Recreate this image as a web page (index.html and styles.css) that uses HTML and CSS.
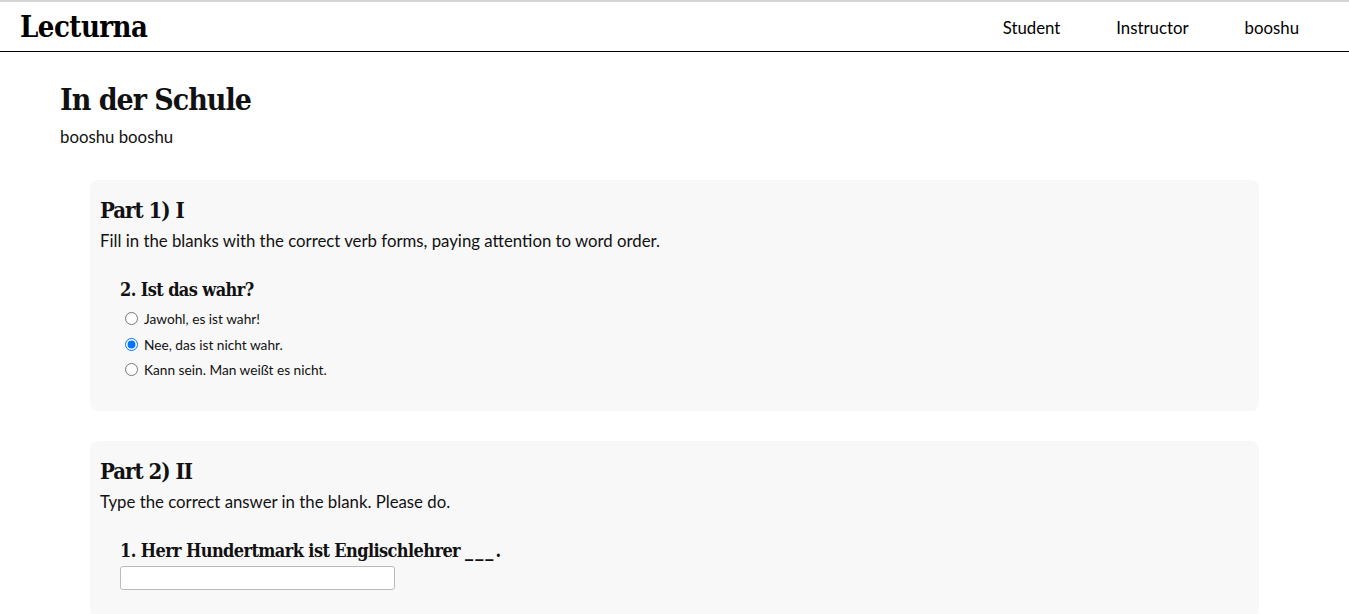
FILE: index.html
```html
<!DOCTYPE html>
<html lang="de">
<head>
<meta charset="utf-8">
<title>Lecturna</title>
<link rel="stylesheet" href="styles.css">
</head>
<body>
<header class="topbar">
  <a class="logo" href="#">Lecturna</a>
  <nav class="nav">
    <a href="#">Student</a>
    <a href="#">Instructor</a>
    <a href="#">booshu</a>
  </nav>
</header>
<main class="main">
  <h1 class="title">In der Schule</h1>
  <p class="subtitle">booshu booshu</p>

  <section class="part">
    <h2 class="part-title">Part 1) I</h2>
    <p class="part-desc">Fill in the blanks with the correct verb forms, paying attention to word order.</p>
    <div class="question">
      <h3 class="q-title">2. Ist das wahr?</h3>
      <div class="options">
        <label class="option"><input type="radio" name="q2"> Jawohl, es ist wahr!</label>
        <label class="option"><input type="radio" name="q2" checked> Nee, das ist nicht wahr.</label>
        <label class="option"><input type="radio" name="q2"> Kann sein. Man weißt es nicht.</label>
      </div>
    </div>
  </section>

  <section class="part">
    <h2 class="part-title">Part 2) II</h2>
    <p class="part-desc">Type the correct answer in the blank. Please do.</p>
    <div class="question">
      <h3 class="q-title">1. Herr Hundertmark ist Englischlehrer <span class="blank">___</span>.</h3>
      <input class="answer" type="text">
    </div>
  </section>
</main>
</body>
</html>
```

FILE: styles.css
```css
* { box-sizing: border-box; }
html, body { margin: 0; padding: 0; background: #fff; }
body {
  font-family: Lato, "Noto Sans", sans-serif;
  color: #111;
  border-top: 2px solid #d4d4d4;
}
.topbar {
  display: flex;
  align-items: center;
  justify-content: space-between;
  height: 50px;
  padding: 0 20px;
  border-bottom: 1px solid #000;
}
.logo {
  font-family: "DejaVu Serif Condensed", "DejaVu Serif", serif;
  font-weight: bold;
  font-size: 29px;
  letter-spacing: -0.5px;
  color: #000;
  text-decoration: none;
}
.nav { display: flex; padding-right: 30px; padding-top: 2px; }
.nav a {
  color: #000;
  text-decoration: none;
  font-size: 16.8px;
  margin-left: 56px;
}
.main { padding: 28px 60px 0; }
.title {
  font-family: "DejaVu Serif Condensed", "DejaVu Serif", serif;
  font-weight: bold;
  font-size: 30px;
  letter-spacing: -1px;
  margin: 0;
  line-height: 40px;
}
.subtitle { margin: 6px 0 0; font-size: 16.8px; }
.part {
  background: #f8f8f8;
  border-radius: 8px;
  margin: 33px 30px 0;
  padding: 16px 10px 28px;
}
.part + .part { margin-top: 30px; }
.part-title {
  font-family: "DejaVu Serif Condensed", "DejaVu Serif", serif;
  font-weight: bold;
  font-size: 22px;
  letter-spacing: -1px;
  margin: 0;
  line-height: 28px;
}
.part-desc { margin: 6px 0 0; font-size: 16.8px; }
.question { padding: 27px 20px 0; }
.q-title {
  font-family: "DejaVu Serif Condensed", "DejaVu Serif", serif;
  font-weight: bold;
  font-size: 18px;
  letter-spacing: -0.6px;
  margin: 0 0 3px;
  line-height: 24px;
}
.blank { letter-spacing: 2px; }
.options { padding-top: 1px; }
.option {
  display: flex;
  align-items: center;
  font-size: 13.7px;
  height: 25.5px;
  padding-left: 5px;
}
.option input { margin: 0 6px 0 0; width: 13px; height: 13px; }
.answer {
  display: block;
  width: 275px;
  height: 24px;
  border: 1px solid #bbb;
  border-radius: 3px;
  background: #fff;
}
```
